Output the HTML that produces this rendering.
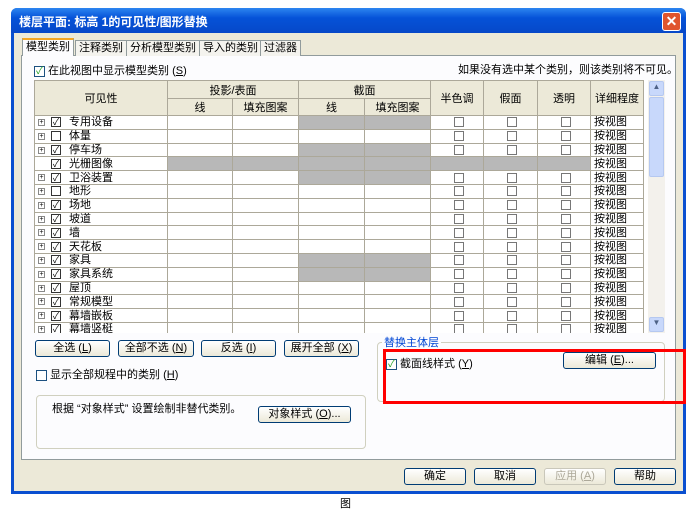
<!DOCTYPE html>
<html><head><meta charset="utf-8"><style>
*{box-sizing:border-box;margin:0;padding:0}
body{width:696px;height:505px;background:#fff;position:relative;overflow:hidden;font-family:"Liberation Sans","Noto Sans CJK SC",sans-serif;font-size:11px;color:#000}
.a{position:absolute}
#win{left:11px;top:8px;width:675px;height:486px;background:#0a4fd0;border-radius:6px 6px 0 0}
#title{left:11px;top:8px;width:675px;height:25px;background:linear-gradient(#2d86f0,#0552d8 40%,#0748c8);border-radius:6px 6px 0 0;color:#fff;font-weight:bold;font-size:12px;padding:5px 8px}
#close{left:662px;top:12px;width:19px;height:19px;background:#e0552e;border:1px solid #fff;border-radius:3px;color:#fff;font-weight:bold;text-align:center;line-height:17px;font-size:14px}
#body{left:14px;top:33px;width:669px;height:458px;background:#ece9d8}
.tab{top:40px;height:16px;border:1px solid #919b9c;border-bottom:none;background:#f4f3ee;padding:0 3px;line-height:14px}
#panel{left:21px;top:55px;width:655px;height:405px;background:#fcfcfe;border:1px solid #919b9c}
.cb{width:11px;height:11px;border:1px solid #1c5180;background:#fff;display:inline-block}
.btn{height:17px;border:1px solid #003c74;border-radius:3px;background:linear-gradient(#fff,#ece9d8);text-align:center;line-height:15px}
table{border-collapse:collapse;table-layout:fixed}
td{border:1px solid #aca899;height:13.8px;padding:0 0 0 3px;line-height:12px;white-space:nowrap;overflow:hidden;font-size:11px}
.g{background:repeating-conic-gradient(#9a9a9a 0 25%,#d6d6d6 0 50%) 0 0/2px 2px}
.c{text-align:center}
.sq{display:inline-block;width:10px;height:10px;border:1px solid #777;background:#fff;vertical-align:middle}
.pl{display:inline-block;width:7px;height:7px;border:1px solid #888;font-size:7px;line-height:5px;text-align:center;vertical-align:middle;margin-right:6px}
.ck{display:inline-block;width:10px;height:10px;border:1px solid #333;font-size:9px;line-height:8px;text-align:center;vertical-align:middle;margin-right:8px}
th{background:#ece9d8;border:1px solid #aca899;font-weight:normal;font-size:11px}
.sb{background:#c8d8fb;border:1px solid #b5c8f0;border-radius:2px;font-size:8px;text-align:center;color:#4d6185;width:15px}
</style></head><body>
<div class="a" id="win"></div>
<div class="a" id="title">楼层平面: 标高 1的可见性/图形替换</div>
<div class="a" id="close">✕</div>
<div class="a" id="body"></div>
<div class="a" id="panel"></div>
<div class="a tab" style="left:22px;top:38px;height:18px;background:#fcfcfe;border-top:2px solid #f5a623">模型类别</div>
<div class="a tab" style="left:75px">注释类别</div>
<div class="a tab" style="left:126px">分析模型类别</div>
<div class="a tab" style="left:199px">导入的类别</div>
<div class="a tab" style="left:260px">过滤器</div>
<div class="a" style="left:34px;top:62px"><span class="cb" style="vertical-align:middle;color:#21a121;font-size:10px;line-height:9px;text-align:center">✓</span> 在此视图中显示模型类别 (<u>S</u>)</div>
<div class="a" style="left:458px;top:61px">如果没有选中某个类别，则该类别将不可见。</div>
<div class="a" style="left:34px;top:80px;width:631px;height:253px;overflow:hidden;background:#fff">
<table style="width:609px">
<colgroup><col style="width:133px"><col style="width:65px"><col style="width:66px"><col style="width:66px"><col style="width:66px"><col style="width:53px"><col style="width:54px"><col style="width:53px"><col style="width:53px"></colgroup>
<tr style="height:18px"><th rowspan="2">可见性</th><th colspan="2">投影/表面</th><th colspan="2">截面</th><th rowspan="2">半色调</th><th rowspan="2">假面</th><th rowspan="2">透明</th><th rowspan="2">详细程度</th></tr>
<tr style="height:16px"><th>线</th><th>填充图案</th><th>线</th><th>填充图案</th></tr>
<tr><td><span class="pl">+</span><span class="ck">✓</span>专用设备</td><td></td><td></td><td class="g"></td><td class="g"></td><td class="c"><span class="sq"></span></td><td class="c"><span class="sq"></span></td><td class="c"><span class="sq"></span></td><td>按视图</td></tr>
<tr><td><span class="pl">+</span><span class="ck"></span>体量</td><td></td><td></td><td></td><td></td><td class="c"><span class="sq"></span></td><td class="c"><span class="sq"></span></td><td class="c"><span class="sq"></span></td><td>按视图</td></tr>
<tr><td><span class="pl">+</span><span class="ck">✓</span>停车场</td><td></td><td></td><td class="g"></td><td class="g"></td><td class="c"><span class="sq"></span></td><td class="c"><span class="sq"></span></td><td class="c"><span class="sq"></span></td><td>按视图</td></tr>
<tr><td><span class="pl" style="border:none"></span><span class="ck">✓</span>光栅图像</td><td class="g"></td><td class="g"></td><td class="g"></td><td class="g"></td><td class="g"></td><td class="g"></td><td class="g"></td><td>按视图</td></tr>
<tr><td><span class="pl">+</span><span class="ck">✓</span>卫浴装置</td><td></td><td></td><td class="g"></td><td class="g"></td><td class="c"><span class="sq"></span></td><td class="c"><span class="sq"></span></td><td class="c"><span class="sq"></span></td><td>按视图</td></tr>
<tr><td><span class="pl">+</span><span class="ck"></span>地形</td><td></td><td></td><td></td><td></td><td class="c"><span class="sq"></span></td><td class="c"><span class="sq"></span></td><td class="c"><span class="sq"></span></td><td>按视图</td></tr>
<tr><td><span class="pl">+</span><span class="ck">✓</span>场地</td><td></td><td></td><td></td><td></td><td class="c"><span class="sq"></span></td><td class="c"><span class="sq"></span></td><td class="c"><span class="sq"></span></td><td>按视图</td></tr>
<tr><td><span class="pl">+</span><span class="ck">✓</span>坡道</td><td></td><td></td><td></td><td></td><td class="c"><span class="sq"></span></td><td class="c"><span class="sq"></span></td><td class="c"><span class="sq"></span></td><td>按视图</td></tr>
<tr><td><span class="pl">+</span><span class="ck">✓</span>墙</td><td></td><td></td><td></td><td></td><td class="c"><span class="sq"></span></td><td class="c"><span class="sq"></span></td><td class="c"><span class="sq"></span></td><td>按视图</td></tr>
<tr><td><span class="pl">+</span><span class="ck">✓</span>天花板</td><td></td><td></td><td></td><td></td><td class="c"><span class="sq"></span></td><td class="c"><span class="sq"></span></td><td class="c"><span class="sq"></span></td><td>按视图</td></tr>
<tr><td><span class="pl">+</span><span class="ck">✓</span>家具</td><td></td><td></td><td class="g"></td><td class="g"></td><td class="c"><span class="sq"></span></td><td class="c"><span class="sq"></span></td><td class="c"><span class="sq"></span></td><td>按视图</td></tr>
<tr><td><span class="pl">+</span><span class="ck">✓</span>家具系统</td><td></td><td></td><td class="g"></td><td class="g"></td><td class="c"><span class="sq"></span></td><td class="c"><span class="sq"></span></td><td class="c"><span class="sq"></span></td><td>按视图</td></tr>
<tr><td><span class="pl">+</span><span class="ck">✓</span>屋顶</td><td></td><td></td><td></td><td></td><td class="c"><span class="sq"></span></td><td class="c"><span class="sq"></span></td><td class="c"><span class="sq"></span></td><td>按视图</td></tr>
<tr><td><span class="pl">+</span><span class="ck">✓</span>常规模型</td><td></td><td></td><td></td><td></td><td class="c"><span class="sq"></span></td><td class="c"><span class="sq"></span></td><td class="c"><span class="sq"></span></td><td>按视图</td></tr>
<tr><td><span class="pl">+</span><span class="ck">✓</span>幕墙嵌板</td><td></td><td></td><td></td><td></td><td class="c"><span class="sq"></span></td><td class="c"><span class="sq"></span></td><td class="c"><span class="sq"></span></td><td>按视图</td></tr>
<tr><td><span class="pl">+</span><span class="ck">✓</span>幕墙竖梃</td><td></td><td></td><td></td><td></td><td class="c"><span class="sq"></span></td><td class="c"><span class="sq"></span></td><td class="c"><span class="sq"></span></td><td>按视图</td></tr>
</table>
<div class="a" style="left:614px;top:0;width:17px;height:253px;background:#f3f1ec"></div>
<div class="a sb" style="left:615px;top:1px;height:15px">▲</div>
<div class="a sb" style="left:615px;top:17px;height:80px"></div>
<div class="a sb" style="left:615px;top:237px;height:15px">▼</div>
</div>
<div class="a btn" style="left:35px;top:340px;width:75px">全选 (<u>L</u>)</div>
<div class="a btn" style="left:118px;top:340px;width:76px">全部不选 (<u>N</u>)</div>
<div class="a btn" style="left:201px;top:340px;width:75px">反选 (<u>I</u>)</div>
<div class="a btn" style="left:284px;top:340px;width:75px">展开全部 (<u>X</u>)</div>
<div class="a" style="left:36px;top:366px"><span class="cb" style="vertical-align:middle"></span> 显示全部规程中的类别 (<u>H</u>)</div>
<div class="a" style="left:377px;top:342px;width:288px;height:60px;border:1px solid #d0d0bf;border-radius:4px"></div>
<div class="a" style="left:382px;top:334px;background:#fcfcfe;color:#0046d5;padding:0 2px">替换主体层</div>
<div class="a" style="left:386px;top:355px"><span class="cb" style="vertical-align:middle;color:#21a121;font-size:10px;line-height:9px;text-align:center">✓</span> 截面线样式 (<u>Y</u>)</div>
<div class="a btn" style="left:563px;top:352px;width:93px">编辑 (<u>E</u>)...</div>
<div class="a" style="left:383px;top:349px;width:303px;height:55px;border:3px solid #f00"></div>
<div class="a" style="left:36px;top:395px;width:330px;height:54px;border:1px solid #d0d0bf;border-radius:4px"></div>
<div class="a" style="left:52px;top:400px">根据 “对象样式” 设置绘制非替代类别。</div>
<div class="a btn" style="left:258px;top:406px;width:93px">对象样式 (<u>O</u>)...</div>
<div class="a btn" style="left:404px;top:468px;width:62px">确定</div>
<div class="a btn" style="left:474px;top:468px;width:62px">取消</div>
<div class="a btn" style="left:544px;top:468px;width:62px;color:#aca899;border-color:#c9c7ba">应用 (<u>A</u>)</div>
<div class="a btn" style="left:614px;top:468px;width:62px">帮助</div>
<div class="a" style="left:340px;top:495px;font-size:11px">图</div>
</body></html>
